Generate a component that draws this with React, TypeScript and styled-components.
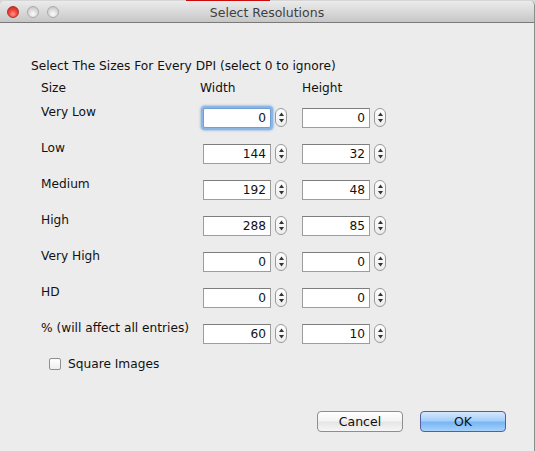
import React from 'react';
import styled, { createGlobalStyle } from 'styled-components';

const GlobalStyle = createGlobalStyle`
  html, body {
    margin: 0;
    padding: 0;
    height: 100%;
  }
  body {
    background: linear-gradient(to right, #d6d6d6 186px, #c90d0d 186px, #c90d0d 270px, #d6d6d6 270px);
    font-family: "DejaVu Sans", "Liberation Sans", sans-serif;
    overflow: hidden;
  }
  #root {
    height: 100%;
  }
`;

const Window = styled.div`
  box-sizing: border-box;
  margin-top: 1px;
  width: 535px;
  height: 450px;
  display: flex;
  flex-direction: column;
  background: #ececec;
  border-right: 1px solid #8c8c8c;
  border-radius: 5px 5px 0 0;
  overflow: hidden;
`;

const TitleBar = styled.div`
  position: relative;
  height: 21px;
  flex: none;
  display: flex;
  align-items: center;
  justify-content: center;
  background: linear-gradient(#ebebeb, #d6d6d6 60%, #c6c6c6);
  border-bottom: 1px solid #7a7a7a;
`;

const Lights = styled.div`
  position: absolute;
  left: 7px;
  top: 5px;
  display: flex;
  gap: 8px;
`;

const Light = styled.span<{ $red?: boolean }>`
  width: 12px;
  height: 12px;
  box-sizing: border-box;
  border-radius: 50%;
  border: 1px solid ${(p) => (p.$red ? '#a8332c' : '#a9a9a9')};
  background: ${(p) =>
    p.$red
      ? 'radial-gradient(circle at 50% 70%, #ff9a8f 0%, #f3443a 45%, #c0231b 100%)'
      : 'radial-gradient(circle at 50% 70%, #fbfbfb 0%, #dcdcdc 50%, #bdbdbd 100%)'};
`;

const Title = styled.div`
  font-size: 12.5px;
  color: #404040;
  margin-top: 1px;
`;

const Body = styled.div`
  flex: 1;
  display: flex;
  flex-direction: column;
  padding: 35px 0 0 31px;
  font-size: 12.2px;
  color: #111;
`;

const Instruction = styled.div`
  line-height: 16px;
  height: 16px;
`;

const Form = styled.div`
  display: grid;
  grid-template-columns: 162px 99px auto;
  grid-template-rows: 24px;
  grid-auto-rows: 36px;
  padding-left: 10px;
  margin-top: 6px;
`;

const HeaderCell = styled.div<{ $shift?: number }>`
  line-height: 16px;
  margin-left: ${(p) => p.$shift ?? 0}px;
`;

const RowLabel = styled.div`
  line-height: 16px;
`;

const FieldCell = styled.div`
  display: flex;
  align-items: flex-start;
  gap: 4px;
  padding-top: 4px;
`;

const Field = styled.div<{ $focused?: boolean }>`
  box-sizing: border-box;
  width: 68px;
  height: 20px;
  background: #fff;
  border: 1px solid #9d9d9d;
  border-top-color: #7d7d7d;
  text-align: right;
  padding-right: 4px;
  line-height: 18px;
  font-size: 12.2px;
  ${(p) =>
    p.$focused &&
    `
    border-color: #6f9fd6;
    box-shadow: 0 0 0 2px #8db5e3, 0 0 2px 3px rgba(110,160,220,0.5);
    border-radius: 2px;
  `}
`;

const SpinBox = styled.div`
  width: 12px;
  height: 19px;
  box-sizing: border-box;
  border: 1px solid #9a9a9a;
  border-radius: 6px;
  background: linear-gradient(#ffffff, #ececec);
  display: flex;
  align-items: center;
  justify-content: center;
`;

const CheckRow = styled.label`
  display: flex;
  align-items: center;
  gap: 7px;
  margin-left: 18px;
  height: 16px;
`;

const Check = styled.span`
  width: 12px;
  height: 12px;
  box-sizing: border-box;
  border: 1px solid #8f8f8f;
  border-radius: 2px;
  background: linear-gradient(#ffffff, #eeeeee);
`;

const ButtonRow = styled.div`
  margin-top: auto;
  display: flex;
  justify-content: flex-end;
  gap: 17px;
  padding: 0 28px 19px 0;
`;

const Button = styled.div<{ $primary?: boolean }>`
  box-sizing: border-box;
  width: 86px;
  height: 21px;
  border-radius: 4px;
  display: flex;
  align-items: center;
  justify-content: center;
  font-size: 12.5px;
  color: #111;
  border: 1px solid ${(p) => (p.$primary ? '#5a5c9c' : '#8e8e8e')};
  background: ${(p) =>
    p.$primary
      ? 'linear-gradient(#d5e8fd, #a6cff9 45%, #78b6f4 55%, #a7d2fb)'
      : 'linear-gradient(#ffffff, #f4f4f4 45%, #e6e6e6 55%, #f6f6f6)'};
`;

const Spinner = () => (
  <SpinBox>
    <svg width="7" height="15" viewBox="0 0 7 15">
      <path d="M3.5 2.5 L6 6 L1 6 Z" fill="#333" />
      <path d="M3.5 12.5 L6 9 L1 9 Z" fill="#333" />
    </svg>
  </SpinBox>
);

const rows: Array<{ label: string; w: number; h: number }> = [
  { label: 'Very Low', w: 0, h: 0 },
  { label: 'Low', w: 144, h: 32 },
  { label: 'Medium', w: 192, h: 48 },
  { label: 'High', w: 288, h: 85 },
  { label: 'Very High', w: 0, h: 0 },
  { label: 'HD', w: 0, h: 0 },
  { label: '% (will affect all entries)', w: 60, h: 10 },
];

export default function App() {
  return (
    <>
      <GlobalStyle />
      <Window>
        <TitleBar>
          <Lights>
            <Light $red />
            <Light />
            <Light />
          </Lights>
          <Title>Select Resolutions</Title>
        </TitleBar>
        <Body>
          <Instruction>Select The Sizes For Every DPI (select 0 to ignore)</Instruction>
          <Form>
            <HeaderCell>Size</HeaderCell>
            <HeaderCell $shift={-3}>Width</HeaderCell>
            <HeaderCell>Height</HeaderCell>
            {rows.map((r, i) => (
              <React.Fragment key={r.label}>
                <RowLabel>{r.label}</RowLabel>
                <FieldCell>
                  <Field $focused={i === 0}>{r.w}</Field>
                  <Spinner />
                </FieldCell>
                <FieldCell>
                  <Field>{r.h}</Field>
                  <Spinner />
                </FieldCell>
              </React.Fragment>
            ))}
          </Form>
          <CheckRow>
            <Check />
            Square Images
          </CheckRow>
          <ButtonRow>
            <Button>Cancel</Button>
            <Button $primary>OK</Button>
          </ButtonRow>
        </Body>
      </Window>
    </>
  );
}
